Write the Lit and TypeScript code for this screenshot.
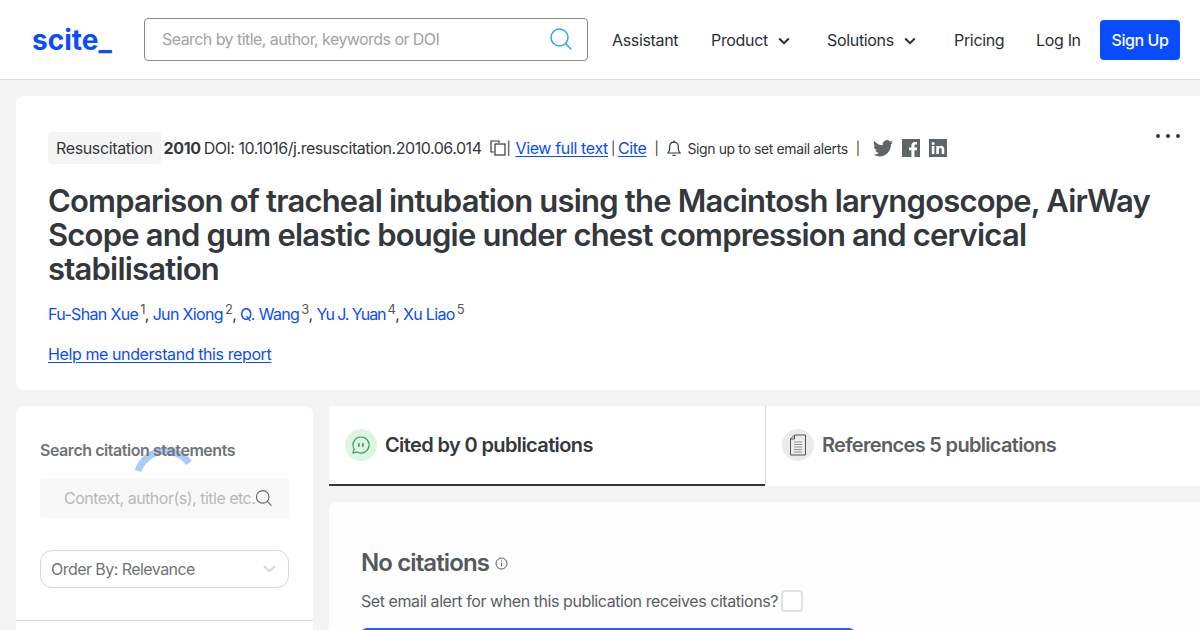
import { css, html, LitElement } from "lit";
import { customElement } from "lit/decorators.js";

const searchIcon = (size: number) => html`<svg width=${size} height=${size} viewBox="0 0 24 24" fill="none" stroke="currentColor" stroke-width="1.5" stroke-linecap="round">
  <circle cx="10.5" cy="10.5" r="8.5"></circle>
  <path d="M17 17l5 5"></path>
</svg>`;

const chevron = html`<svg class="chev" width="12" height="8" viewBox="0 0 12 8" fill="none" stroke="currentColor" stroke-width="2">
  <path d="M1.2 1.5L6 6.2l4.8-4.7"></path>
</svg>`;

@customElement("app-root")
class AppRoot extends LitElement {
  protected render() {
    return html`
      <header class="topbar">
        <a class="logo">scite_</a>
        <div class="search">
          <span class="placeholder">Search by title, author, keywords or DOI</span>
          <span class="search-icon">${searchIcon(24)}</span>
        </div>
        <nav class="nav">
          <a class="assistant">Assistant</a>
          <a class="product">Product ${chevron}</a>
          <a class="solutions">Solutions ${chevron}</a>
          <a class="pricing">Pricing</a>
          <a class="login">Log In</a>
          <a class="signup">Sign Up</a>
        </nav>
      </header>

      <section class="report">
        <div class="meta">
          <span class="journal">Resuscitation</span>
          <b class="year">2010</b>
          <span class="doi">DOI: 10.1016/j.resuscitation.2010.06.014</span>
          <svg class="copy" width="17" height="16" viewBox="0 0 17 16" fill="none" stroke="#33383d" stroke-width="1.2">
            <path d="M4 12H1V1h8v2"></path>
            <rect x="5" y="4" width="10" height="11"></rect>
          </svg>
          <span class="sep first">|</span>
          <a class="link">View full text</a>
          <span class="sep">|</span>
          <a class="link">Cite</a>
          <span class="sep wide">|</span>
          <svg class="bell" width="14" height="17" viewBox="0 0 14 17" fill="none" stroke="#33383d" stroke-width="1.2">
            <path d="M1 13c1.3-1.2 1.7-2.4 1.7-4.4V6.400C2.700 3.900 4.500 2.200 7 2.200s4.300 1.700 4.300 4.200v2.200c0 2 .4 3.200 1.700 4.400z"></path>
            <path d="M7 .6v1.600M5.500 15.400h3"></path>
          </svg>
          <span class="alerts">Sign up to set email alerts</span>
          <span class="sep wide">|</span>
          <svg class="social twitter" width="20" height="17" viewBox="0 0 24 20" fill="#5f6468">
            <path d="M24 2.400a9.800 9.800 0 0 1-2.800.8A4.900 4.900 0 0 0 23.300.5a9.800 9.800 0 0 1-3.100 1.200 4.900 4.900 0 0 0-8.400 4.500A14 14 0 0 1 1.700.9a4.900 4.900 0 0 0 1.500 6.600 4.900 4.900 0 0 1-2.200-.6c0 2.400 1.700 4.400 3.900 4.900a4.900 4.900 0 0 1-2.200.1 4.900 4.900 0 0 0 4.600 3.400A9.900 9.900 0 0 1 0 17.300 14 14 0 0 0 7.500 19.500c9.100 0 14.300-7.700 14-14.600A10 10 0 0 0 24 2.400z"></path>
          </svg>
          <svg class="social" width="18" height="18" viewBox="0 0 18 18">
            <path fill="#5f6468" d="M0 0h18v18h-5.500v-6.800h2.300l.4-2.700h-2.700V6.800c0-.8.2-1.300 1.300-1.300H15V3.100c-.3 0-1.100-.1-2.100-.1-2.100 0-3.500 1.300-3.500 3.600v1.900H7v2.700h2.400V18H0z"></path>
          </svg>
          <svg class="social" width="18" height="18" viewBox="0 0 18 18">
            <path fill="#5f6468" fill-rule="evenodd" d="M0 0h18v18H0zM2.800 7v8h2.600V7zM4.100 2.900a1.500 1.500 0 1 0 0 3 1.500 1.500 0 0 0 0-3zM7.300 7v8h2.600v-4.200c0-1.100.4-1.900 1.500-1.900s1.300.9 1.300 2V15h2.600v-4.600c0-2.300-1.200-3.600-3.100-3.600-1.200 0-1.900.6-2.300 1.200V7z"></path>
          </svg>
        </div>
        <span class="more"><i></i><i></i><i></i></span>
        <h1>Comparison of tracheal intubation using the Macintosh laryngoscope, AirWay Scope and gum elastic bougie under chest compression and cervical stabilisation</h1>
        <div class="authors">
          <a>Fu-Shan Xue</a><sup>1</sup>, <a>Jun Xiong</a><sup>2</sup>, <a>Q. Wang</a><sup>3</sup>, <a class="tight">Yu J. Yuan</a><sup>4</sup>, <a>Xu Liao</a><sup>5</sup>
        </div>
        <a class="link help">Help me understand this report</a>
      </section>

      <div class="lower">
        <aside class="sidebar">
          <svg class="spinner" width="60" height="30" viewBox="0 0 60 30" fill="none" stroke="#a9cdfb" stroke-width="7">
            <path d="M4 25A29 29 0 0 1 55 17"></path>
          </svg>
          <div class="side-title">Search citation statements</div>
          <div class="side-search">
            <span>Context, author(s), title etc.</span>
            ${searchIcon(18)}
          </div>
          <div class="order">
            <span>Order By: Relevance</span>
            <svg width="13" height="8" viewBox="0 0 13 8" fill="none" stroke="#dcdcdc" stroke-width="2.400"><path d="M1 1.200l5.500 5 5.500-5"></path></svg>
          </div>
          <div class="side-rule"></div>
        </aside>

        <main class="main">
          <div class="tabs">
            <div class="tab active">
              <span class="badge green">
                <svg width="20" height="20" viewBox="0 0 20 20" fill="none" stroke="#2f9e4f" stroke-width="1.200">
                  <path d="M10 2a8 8 0 1 1-3.800 15L2 18l1.200-3.800A8 8 0 0 1 10 2z"></path>
                  <path d="M8 8.300v1.600c0 .8-.4 1.300-1 1.500M12 8.300v1.600c0 .8-.4 1.300-1 1.500" stroke-width="1.600"></path>
                </svg>
              </span>
              Cited by 0 publications
            </div>
            <div class="tab inactive">
              <span class="badge grey">
                <svg width="18" height="22" viewBox="0 0 18 22" fill="none" stroke="#555" stroke-width="1">
                  <path d="M5.500 1H16.500V21H1.500V5z"></path>
                  <path d="M5.500 1V5H1.500"></path>
                  <path d="M5 8h8M5 10.500h8M5 13h8M5 15.500h8M5 18h8" stroke="#999" stroke-width="1.200"></path>
                </svg>
              </span>
              References 5 publications
            </div>
          </div>
          <div class="panel">
            <h2>No citations
              <svg width="13" height="13" viewBox="0 0 13 13" fill="none" stroke="#555" stroke-width="1">
                <circle cx="6.500" cy="6.500" r="5.500"></circle>
                <path d="M6.500 5.800v3.400M6.500 3.400v1.100"></path>
              </svg>
            </h2>
            <div class="alert-row">
              <span>Set email alert for when this publication receives citations?</span>
              <span class="checkbox"></span>
            </div>
            <div class="cta"></div>
          </div>
        </main>
      </div>
    `;
  }

  static styles = css`
    :host {
      display: block;
      width: 1200px;
      height: 630px;
      overflow: hidden;
      background: #f4f4f4;
      font-family: Inter, "Liberation Sans", sans-serif;
      color: #33383d;
    }

    .topbar {
      display: flex;
      align-items: center;
      height: 79px;
      background: #fff;
      border-bottom: 1px solid #dcdcdc;
      padding: 0 20px 0 32px;
    }

    .logo {
      width: 112px;
      font-size: 28px;
      font-weight: 700;
      color: #0a4cff;
    }

    .search {
      display: flex;
      align-items: center;
      justify-content: space-between;
      box-sizing: border-box;
      width: 444px;
      height: 43px;
      margin-top: -1px;
      border: 1px solid #8a8a8a;
      border-radius: 4px;
      padding: 0 14px 0 17px;
    }

    .placeholder {
      font-size: 16px;
      letter-spacing: -0.56px;
      color: #a3a3a3;
    }

    .search-icon {
      display: flex;
      color: #2aa8f5;
    }

    .nav {
      display: flex;
      align-items: center;
      flex: 1;
      font-size: 16px;
      letter-spacing: -0.33px;
      color: #2b2f33;
      margin-left: 24px;
    }

    .nav a {
      display: flex;
      align-items: center;
      white-space: pre;
    }

    .chev {
      margin-left: 6px;
      margin-top: 2px;
    }

    .assistant {
      width: 99px;
    }

    .product {
      width: 116px;
    }

    .solutions {
      width: 127px;
    }

    .pricing {
      width: 82px;
    }

    .login {
      width: 64px;
    }

    .nav .signup {
      justify-content: center;
      width: 80px;
      height: 40px;
      border-radius: 4px;
      background: #0a4cff;
      color: #fff;
      font-weight: 500;
      letter-spacing: -0.45px;
    }

    .report {
      position: relative;
      box-sizing: border-box;
      height: 294px;
      margin: 16px 0 16px 16px;
      padding: 36px 32px 0;
      background: #fff;
      border-radius: 8px 0 0 8px;
    }

    .meta {
      display: flex;
      align-items: center;
      height: 32px;
      font-size: 16px;
      letter-spacing: -0.36px;
      color: #33383d;
      white-space: pre;
    }

    .journal {
      display: flex;
      align-items: center;
      height: 32px;
      padding: 0 8px;
      margin-right: 3px;
      background: #f4f4f4;
      border-radius: 4px;
    }

    .year {
      font-weight: 700;
      margin-right: 3px;
    }

    .doi {
      letter-spacing: -0.46px;
    }

    .copy {
      margin-left: 8px;
    }

    .sep {
      margin: 0 3px;
      font-size: 13px;
    }

    .sep.first {
      margin-left: 0;
      margin-right: 5px;
    }

    .sep.wide {
      margin: 0 8px;
    }

    .bell {
      margin-left: 1px;
      margin-right: 6px;
    }

    .alerts {
      font-size: 14px;
      letter-spacing: -0.38px;
    }

    .social {
      margin-right: 9px;
    }

    .twitter {
      margin-left: 5px;
    }

    .link {
      color: #0a4cff;
      text-decoration: underline;
      text-underline-offset: 2px;
    }

    .more {
      position: absolute;
      top: 38px;
      right: 20px;
      display: flex;
      gap: 6px;
    }

    .more i {
      width: 4px;
      height: 4px;
      border-radius: 50%;
      background: #33383d;
    }

    h1 {
      margin: 20px 0 0;
      font-size: 31px;
      line-height: 34px;
      font-weight: 600;
      letter-spacing: -0.8px;
      color: #33383d;
    }

    .authors {
      margin-top: 16px;
      height: 24px;
      font-size: 16px;
      line-height: 24px;
      letter-spacing: -0.66px;
    }

    .authors a {
      color: #0a4cff;
    }

    .authors .tight {
      letter-spacing: -1.1px;
    }

    sup {
      font-size: 13px;
      line-height: 0;
      margin-left: 2px;
      color: #53585c;
    }

    .help {
      display: inline-block;
      margin-top: 18px;
      font-size: 16px;
      letter-spacing: -0.4px;
    }

    .lower {
      display: flex;
      gap: 16px;
      margin-left: 16px;
    }

    .sidebar {
      position: relative;
      box-sizing: border-box;
      width: 297px;
      height: 300px;
      padding: 34px 24px 0;
      background: #fff;
      border-radius: 8px 8px 0 0;
    }

    .side-title {
      position: relative;
      font-size: 16px;
      font-weight: 600;
      letter-spacing: -0.45px;
      color: #6f7478;
    }

    .side-search {
      display: flex;
      align-items: center;
      justify-content: space-between;
      box-sizing: border-box;
      height: 40px;
      margin-top: 18px;
      padding: 0 16px 0 24px;
      background: #f8f8f8;
      border-radius: 4px;
      color: #666;
      font-size: 16px;
      letter-spacing: -0.5px;
      white-space: nowrap;
    }

    .side-search span {
      color: #b8b8b8;
    }

    .order {
      display: flex;
      align-items: center;
      justify-content: space-between;
      box-sizing: border-box;
      height: 38px;
      margin-top: 32px;
      padding: 0 12px 0 10px;
      border: 1px solid #d8d8d8;
      border-radius: 12px;
      color: #6f7478;
      font-size: 16px;
      letter-spacing: -0.55px;
    }

    .side-rule {
      height: 1px;
      margin: 32px -24px 0;
      background: #d8d8d8;
    }

    .spinner {
      position: absolute;
      left: 118px;
      top: 40px;
      overflow: visible;
    }

    .main {
      flex: 1;
    }

    .tabs {
      display: flex;
      height: 80px;
      background: #fff;
    }

    .tab {
      display: flex;
      align-items: center;
      gap: 8px;
      box-sizing: border-box;
      height: 80px;
      font-size: 20px;
      font-weight: 600;
      letter-spacing: -0.62px;
    }

    .tab.active {
      width: 436px;
      padding-left: 16px;
      color: #33383d;
      border-bottom: 2px solid #33383d;
    }

    .tab.inactive {
      flex: 1;
      padding: 0 0 2px 16px;
      color: #5c5f62;
      border-left: 1px solid #dcdcdc;
      letter-spacing: -0.68px;
    }

    .badge {
      display: flex;
      align-items: center;
      justify-content: center;
      width: 32px;
      height: 32px;
      border-radius: 50%;
    }

    .green {
      background: #dff5e3;
    }

    .grey {
      background: #ebebeb;
    }

    .panel {
      height: 200px;
      margin-top: 16px;
      padding: 46px 32px 0;
      background: #fdfdfd;
      border-radius: 8px 0 0 0;
    }

    h2 {
      display: flex;
      align-items: center;
      gap: 6px;
      margin: 0;
      font-size: 24px;
      line-height: 30px;
      font-weight: 600;
      letter-spacing: -0.9px;
      color: #53585c;
    }

    .alert-row {
      display: flex;
      align-items: center;
      gap: 3px;
      margin-top: 12px;
      font-size: 16px;
      letter-spacing: -0.43px;
      color: #5c6064;
    }

    .checkbox {
      box-sizing: border-box;
      width: 22px;
      height: 22px;
      border: 2px solid #e2e2e2;
      border-radius: 4px;
      background: #fff;
    }

    .cta {
      width: 494px;
      height: 40px;
      margin-top: 16px;
      border-radius: 6px;
      background: #2563eb;
    }
  `;
}

declare global {
  interface HTMLElementTagNameMap {
    "app-root": AppRoot;
  }
}
